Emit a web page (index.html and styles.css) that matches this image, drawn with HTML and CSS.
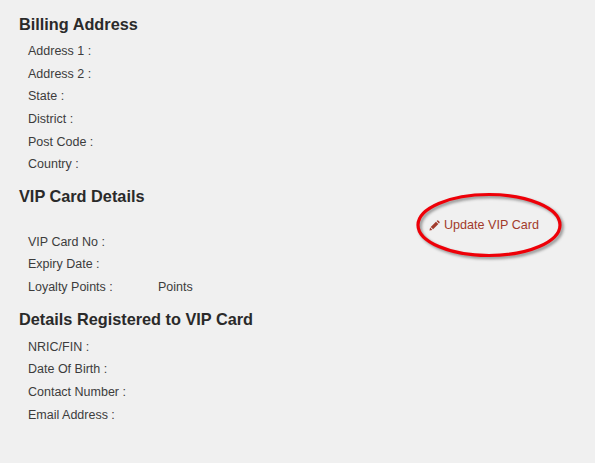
FILE: index.html
```html
<!DOCTYPE html>
<html lang="en">
<head>
<meta charset="UTF-8" />
<meta name="viewport" content="width=device-width, initial-scale=1" />
<title>Account Details</title>
<link rel="stylesheet" href="styles.css">
</head>
<body>
<div class="page">
  <h3>Billing Address</h3>
  <div class="details">
    <div class="row">Address 1 :</div>
    <div class="row">Address 2 :</div>
    <div class="row">State :</div>
    <div class="row">District :</div>
    <div class="row">Post Code :</div>
    <div class="row">Country :</div>
  </div>
  <h3 class="next">VIP Card Details</h3>
  <div class="update-row">
    <a class="update-link" href="#">
      <svg class="pencil" viewBox="0 0 12 12" aria-hidden="true">
        <path d="M0.5 11.5 L1.2 8.3 L3.7 10.8 Z M1.9 7.5 L7.6 1.8 L10.2 4.4 L4.5 10.1 Z M8.3 1.1 L9 0.5 Q9.5 0.1 10 0.5 L11.5 2 Q11.9 2.5 11.5 3 L10.9 3.7 Z" />
      </svg>
      Update VIP Card
    </a>
  </div>
  <div class="details">
    <div class="row">VIP Card No :</div>
    <div class="row">Expiry Date :</div>
    <div class="row"><span class="label">Loyalty Points :</span>Points</div>
  </div>
  <h3 class="next">Details Registered to VIP Card</h3>
  <div class="details registered">
    <div class="row">NRIC/FIN :</div>
    <div class="row">Date Of Birth :</div>
    <div class="row">Contact Number :</div>
    <div class="row">Email Address :</div>
  </div>
  <!-- hand drawn marker round the link -->
  <svg class="marker" viewBox="0 0 160 76" aria-hidden="true">
    <ellipse class="marker-shadow" cx="75" cy="35" rx="71" ry="30.5" />
    <ellipse class="marker-line" cx="73" cy="33" rx="71" ry="30.5" />
  </svg>
</div>
</body>
</html>
```

FILE: styles.css
```css
body {
  margin: 0;
  background-color: white;
  font-family: "Liberation Sans", Arial, sans-serif;
}
.page {
  position: relative;
  box-sizing: border-box;
  width: 595px;
  height: 463px;
  padding: 15px 0 0 19px;
  background-color: #f0f0f0;
  color: #3c3c3c;
  font-size: 12.5px;
}
h3 {
  margin: 0;
  font-size: 16.3px;
  line-height: 18px;
  color: #2a2a2a;
}
h3.next {
  margin-top: 11px;
}
.details {
  margin-top: 7px;
  padding-left: 9px;
}
.details.registered {
  margin-top: 8px;
}
.row {
  height: 22.7px;
  line-height: 22.7px;
}
.label {
  display: inline-block;
  width: 130px;
}
.update-row {
  display: flex;
  justify-content: flex-end;
  height: 7.6px;
  margin-top: 11px;
  padding-right: 56px;
}
.update-link {
  display: flex;
  align-items: center;
  align-self: flex-start;
  gap: 4px;
  color: #a23b2b;
  font-size: 12.6px;
  text-decoration: none;
  line-height: 18px;
}
.pencil {
  width: 11px;
  height: 11px;
  fill: #a23b2b;
}
.marker {
  position: absolute;
  left: 416px;
  top: 192px;
  width: 160px;
  height: 76px;
}
.marker ellipse {
  fill: none;
}
.marker-shadow {
  stroke: rgba(50, 50, 50, 0.55);
  stroke-width: 3px;
  filter: blur(1.5px);
}
.marker-line {
  stroke: #ee0008;
  stroke-width: 3.2px;
}
```
